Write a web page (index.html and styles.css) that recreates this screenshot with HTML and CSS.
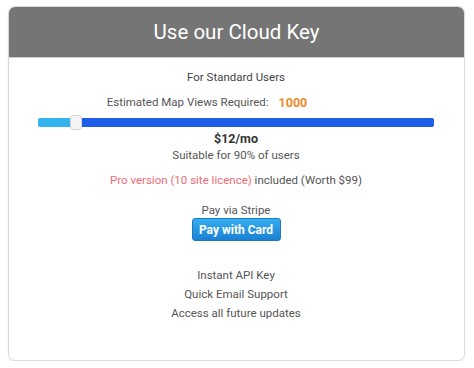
FILE: index.html
```html
<!DOCTYPE html>
<html lang="en">
<head>
<meta charset="UTF-8">
<title>Use our Cloud Key</title>
<link rel="stylesheet" href="styles.css">
</head>
<body>
<div class="card">
    <header class="card-head">
        <h1>Use our Cloud Key</h1>
    </header>
    <div class="card-body">
        <p class="plan">For Standard Users</p>
        <div class="estimate">
            <span>Estimated Map Views Required:</span>
            <strong class="views">1000</strong>
        </div>
        <div class="slider">
            <div class="track-fill"></div>
            <div class="thumb"></div>
            <div class="track"></div>
        </div>
        <p class="price">$12/mo</p>
        <p class="suitable">Suitable for 90% of users</p>
        <p class="pro"><span class="pro-link">Pro version (10 site licence)</span> included (Worth $99)</p>
        <p class="stripe">Pay via Stripe</p>
        <button class="pay-button">Pay with Card</button>
        <ul class="features">
            <li>Instant API Key</li>
            <li>Quick Email Support</li>
            <li>Access all future updates</li>
        </ul>
    </div>
</div>
</body>
</html>
```

FILE: styles.css
```css
body {
    margin: 0;
    padding: 6px 0 0 8px;
    font-family: Roboto, "Liberation Sans", sans-serif;
    background: #fff;
    color: #555;
}
p {
    margin: 0;
}
.card {
    width: 455px;
    border: 1px solid #d9d9d9;
    border-radius: 7px;
    overflow: hidden;
    box-shadow: 0 1px 2px rgba(0, 0, 0, 0.08);
}
.card-head {
    background: #757575;
    height: 50px;
    display: flex;
    align-items: center;
    justify-content: center;
    border-bottom: 1px solid #ccc;
}
.card-head h1 {
    margin: 0;
    color: #fff;
    font-weight: 400;
    font-size: 20.5px;
}
.card-body {
    padding: 10px 30px 37px 29px;
    text-align: center;
    font-size: 11.5px;
}
.plan {
    line-height: 19px;
    color: #444;
}
.estimate {
    margin-top: 6px;
    line-height: 19px;
    display: flex;
    justify-content: center;
    gap: 10px;
    padding-right: 58px;
}
.views {
    color: #f08a2c;
    font-size: 12.5px;
}
.slider {
    margin-top: 3px;
    height: 15px;
    display: flex;
    align-items: center;
}
.track-fill {
    width: 32px;
    height: 9px;
    background: #33b4ee;
    border-radius: 2px 0 0 2px;
}
.thumb {
    width: 12px;
    height: 15px;
    background: #f4f4f4;
    border: 1px solid #d4d4d4;
    border-radius: 3px;
    box-sizing: border-box;
}
.track {
    flex: 1;
    height: 9px;
    background: #1f5ee8;
    border-radius: 0 2px 2px 0;
}
.price {
    margin-top: 1px;
    line-height: 16px;
    font-size: 12.5px;
    font-weight: 700;
    color: #333;
}
.suitable {
    line-height: 16px;
}
.pro {
    margin-top: 8px;
    line-height: 19px;
}
.pro-link {
    color: #ef6b74;
}
.stripe {
    margin-top: 12px;
    line-height: 16px;
}
.pay-button {
    display: block;
    margin: 0 auto;
    height: 23px;
    width: 89px;
    padding: 0;
    border: 1px solid #1b78c4;
    border-radius: 3px;
    background: linear-gradient(#36aef0, #1a80d2);
    color: #fff;
    font-family: inherit;
    font-size: 12px;
    font-weight: 700;
}
.features {
    list-style: none;
    margin: 25px 0 0;
    padding: 0;
    line-height: 19px;
}
```
